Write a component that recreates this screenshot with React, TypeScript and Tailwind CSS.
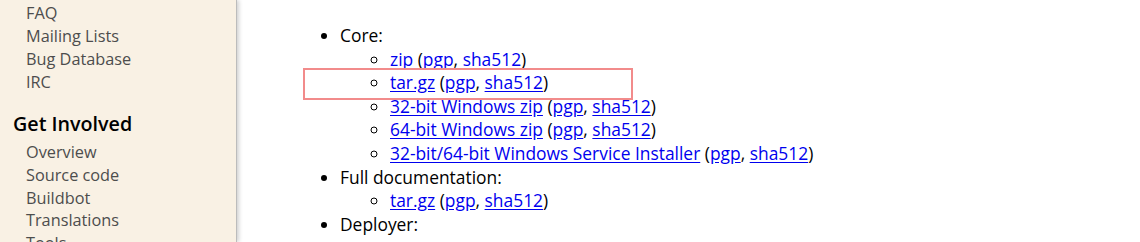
import React from "react";

const A = ({ children }: { children: React.ReactNode }) => (
  <a href="#" className="text-[#0000ee] underline underline-offset-2">
    {children}
  </a>
);

const Sig = () => (
  <>
    {" "}(<A>pgp</A>, <A>sha512</A>)
  </>
);

export default function App() {
  return (
    <div
      className="relative flex w-[1140px] h-[242px] overflow-hidden bg-white"
      style={{ fontFamily: '"Open Sans", sans-serif' }}
    >
      <aside className="w-[237px] shrink-0 bg-[#f9f1e4] border-r border-[#bcbcbc] shadow-[2px_0_4px_rgba(0,0,0,0.18)] text-[16.3px] leading-[23px] text-[#4d4d4d] pt-[2px]">
        <ul className="pl-[26px]">
          <li>FAQ</li>
          <li>Mailing Lists</li>
          <li>Bug Database</li>
          <li>IRC</li>
        </ul>
        <h3 className="pl-[13px] mt-[17px] mb-[4px] text-[19.7px] leading-[26px] font-semibold text-black">
          Get Involved
        </h3>
        <ul className="pl-[26px] leading-[22.75px]">
          <li>Overview</li>
          <li>Source code</li>
          <li>Buildbot</li>
          <li>Translations</li>
          <li>Tools</li>
        </ul>
      </aside>
      <main className="flex-1 pt-[24px] text-[17.4px] leading-[23.6px] text-black">
        <ul className="list-disc pl-[103px]">
          <li>
            Core:
            <ul className="list-[circle] pl-[50px]">
              <li>
                <A>zip</A>
                <Sig />
              </li>
              <li>
                <A>tar.gz</A>
                <Sig />
              </li>
              <li>
                <A>32-bit Windows zip</A>
                <Sig />
              </li>
              <li>
                <A>64-bit Windows zip</A>
                <Sig />
              </li>
              <li>
                <A>32-bit/64-bit Windows Service Installer</A>
                <Sig />
              </li>
            </ul>
          </li>
          <li>
            Full documentation:
            <ul className="list-[circle] pl-[50px]">
              <li>
                <A>tar.gz</A>
                <Sig />
              </li>
            </ul>
          </li>
          <li>Deployer:</li>
        </ul>
      </main>
      <div className="absolute left-[303px] top-[68px] w-[330px] h-[32px] border-2 border-[#f28b8b] pointer-events-none" />
    </div>
  );
}
